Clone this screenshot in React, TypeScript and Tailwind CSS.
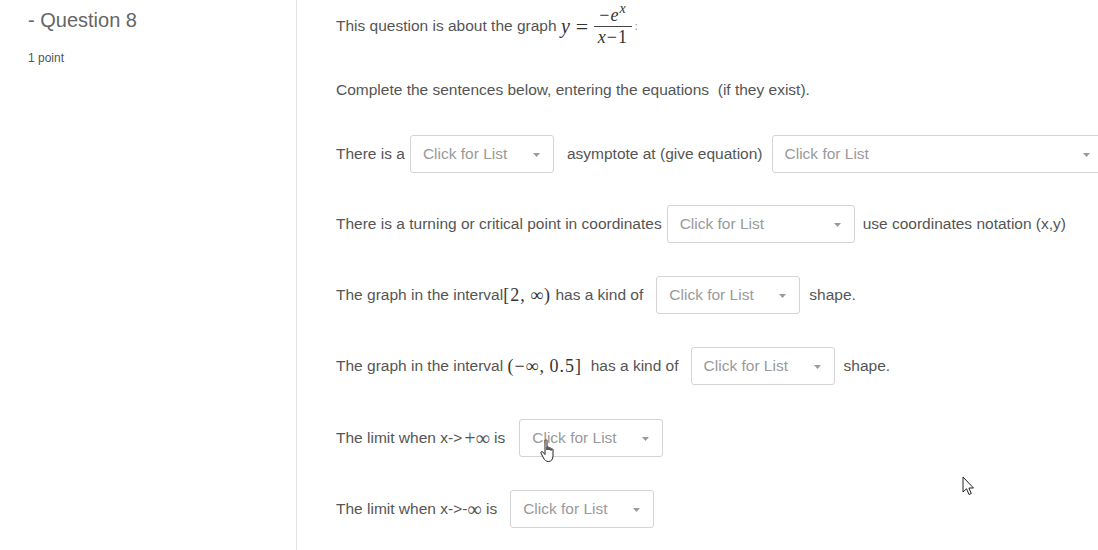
import React from "react";

const sans = { fontFamily: '"Liberation Sans", Arial, sans-serif' };
const serif = { fontFamily: '"Liberation Serif", "Times New Roman", serif' };

function Select({ w, extra = "" }: { w: string; extra?: string }) {
  return (
    <div
      className={`relative flex h-[38px] shrink-0 items-center rounded-[3px] border border-[#d4d4d4] bg-white pl-[12px] text-[15.5px] text-[#9a9a9a] ${w} ${extra}`}
    >
      <span>Click for List</span>
      <svg className="absolute right-[13px] top-[17px]" width="7" height="4" viewBox="0 0 7 4">
        <path d="M0 0 L7 0 L3.5 4 Z" fill="#9a9a9a" />
      </svg>
    </div>
  );
}

function M({ children }: { children: React.ReactNode }) {
  return (
    <span className="text-[18px] font-medium tracking-[1px] text-[#333]" style={serif}>
      {children}
    </span>
  );
}

export default function App() {
  return (
    <div className="relative flex h-[550px] w-[1098px] overflow-hidden bg-white text-[#555]" style={sans}>
      <div className="w-[297px] shrink-0 border-r border-[#e3e3e3] pl-[28px]">
        <div className="mt-[8px] text-[20px] leading-[24px] text-[#666]">- Question 8</div>
        <div className="mt-[18px] text-[12px] leading-[16px] text-[#555]">1 point</div>
      </div>
      <div className="flex flex-col pl-[39px] text-[15.5px] whitespace-nowrap">
        <div className="mt-[7px] flex h-[38px] items-center">
          <span>This question is about the graph&nbsp;</span>
          <span className="flex items-center text-[#333]" style={serif}>
            <span className="text-[20px] italic">y</span>
            <span className="mx-[6px] text-[22px]">=</span>
            <span className="inline-flex flex-col items-center">
              <span className="px-[5px] text-[18px] leading-[19px] tracking-[1px]">
                −<i>e</i>
                <sup className="top-[-8px] text-[14px] italic">x</sup>
              </span>
              <span className="mt-[1px] h-[1px] w-full bg-[#444]" />
              <span className="text-[18px] leading-[20px] tracking-[1px]">
                <i>x</i>−1
              </span>
            </span>
            <span className="ml-[3px] text-[12px] text-[#999]">:</span>
          </span>
        </div>
        <div className="mt-[26px] flex h-[38px] items-center">
          Complete the sentences below, entering the equations&nbsp; (if they exist).
        </div>
        <div className="mt-[26px] flex h-[38px] items-center">
          <span>There is a</span>
          <Select w="w-[144px]" extra="ml-[5px]" />
          <span className="ml-[13px]">asymptote at (give equation)</span>
          <Select w="w-[332px]" extra="ml-[9px]" />
        </div>
        <div className="mt-[32px] flex h-[38px] items-center">
          <span>There is a turning or critical point in coordinates</span>
          <Select w="w-[188px]" extra="ml-[5px]" />
          <span className="ml-[8px]">use coordinates notation (x,y)</span>
        </div>
        <div className="mt-[33px] flex h-[38px] items-center">
          <span>The graph in the interval</span>
          <M>[2,&thinsp;∞)</M>
          <span>&nbsp;has a kind of</span>
          <Select w="w-[144px]" extra="ml-[13px]" />
          <span className="ml-[9px]">shape.</span>
        </div>
        <div className="mt-[33px] flex h-[38px] items-center">
          <span>The graph in the interval&nbsp;</span>
          <M>(−∞,&thinsp;0.5]</M>
          <span>&nbsp; has a kind of</span>
          <Select w="w-[144px]" extra="ml-[12px]" />
          <span className="ml-[9px]">shape.</span>
        </div>
        <div className="mt-[34px] flex h-[38px] items-center">
          <span>The limit when x-&gt;</span>
          <span className="ml-[2px] text-[20px]" style={serif}>+∞</span>
          <span>&nbsp;is</span>
          <Select w="w-[144px]" extra="ml-[14px]" />
        </div>
        <div className="mt-[33px] flex h-[38px] items-center">
          <span>The limit when x-&gt;-</span>
          <span className="text-[20px]" style={serif}>∞</span>
          <span>&nbsp;is</span>
          <Select w="w-[144px]" extra="ml-[13px]" />
        </div>
      </div>

      {/* hand cursor */}
      <svg className="absolute left-[540px] top-[439px]" width="20" height="26" viewBox="0 0 20 26">
        <path
          d="M5 1.5 C5 0.6 7 0.6 7 1.5 L7 11 L7 8.5 C7 7.6 9 7.6 9 8.5 L9 11 L9 9.5 C9 8.6 11 8.6 11 9.5 L11 11.5 L11 10.5 C11 9.6 13 9.6 13 10.5 L13 17 C13 20 11.5 22.5 8.5 22.5 C6 22.5 4.5 21 3.5 19 L1 14 C0.5 13 1.8 12 2.8 13 L5 15.5 Z"
          fill="white"
          stroke="#222"
          strokeWidth="1"
          strokeLinejoin="round"
        />
      </svg>
      {/* arrow cursor */}
      <svg className="absolute left-[962px] top-[476px]" width="14" height="22" viewBox="0 0 14 22">
        <path
          d="M1 1 L1 16 L4.5 12.8 L7 18.5 L9.3 17.5 L6.9 12 L11.5 12 Z"
          fill="white"
          stroke="#222"
          strokeWidth="1"
          strokeLinejoin="round"
        />
      </svg>
    </div>
  );
}
